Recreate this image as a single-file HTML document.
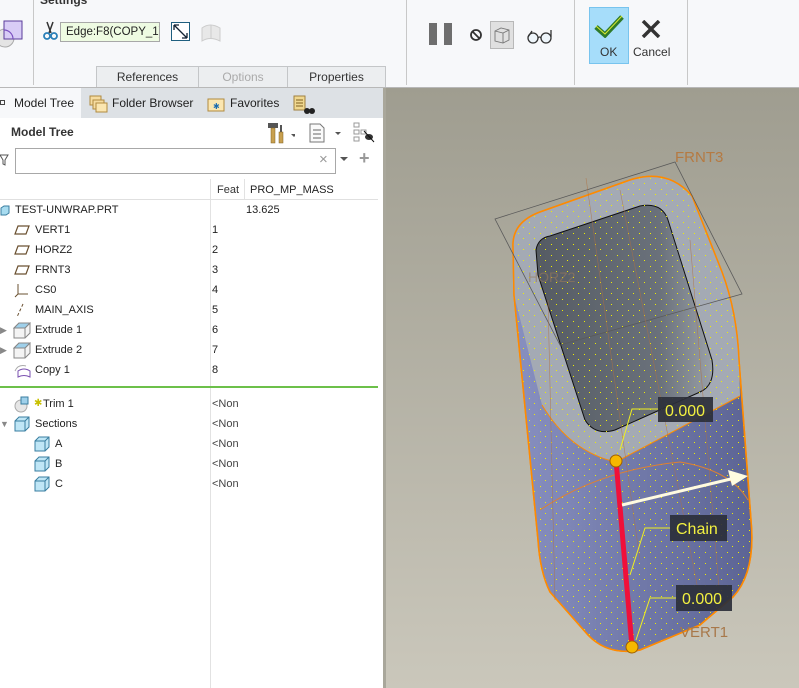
<!DOCTYPE html>
<html><head><meta charset="utf-8"><style>
*{margin:0;padding:0;box-sizing:border-box}
body{width:799px;height:688px;overflow:hidden;position:relative;font-family:"Liberation Sans",sans-serif;font-size:12px;color:#222;background:#f7f8fa}
.a{position:absolute}
.tab{position:absolute;top:66px;height:22px;background:#eceef0;border:1px solid #c4c6c8;border-bottom:none;text-align:center;line-height:21px;font-size:12px;color:#333}
.row{position:absolute;left:0;width:383px;height:20px;line-height:20px;font-size:11px;color:#222}
.row .n{position:absolute;left:212px}
.vs{position:absolute;width:1px;background:#c8c8c8}
</style></head><body>
<div class="a" style="left:40px;top:-7px;font-weight:bold;font-size:12px;color:#333">Settings</div>
<div class="vs" style="left:33px;top:0;height:85px"></div>
<div class="vs" style="left:406px;top:0;height:85px"></div>
<div class="vs" style="left:574px;top:0;height:85px"></div>
<div class="vs" style="left:687px;top:0;height:85px"></div>
<svg class="a" style="left:0;top:18px" width="30" height="34"><circle cx="5" cy="20" r="9" fill="#e4e4e4" stroke="#aaa"/><rect x="4" y="3" width="18" height="18" fill="#d8ccf6" stroke="#5a3d9a"/><path d="M4 12 A9 9 0 0 1 13 21" fill="none" stroke="#7a4fc0" stroke-width="1.2"/></svg>
<svg class="a" style="left:41px;top:21px" width="18" height="20"><path d="M6 1 L10 12 M12 1 L8 12" stroke="#333" stroke-width="1.5"/><circle cx="6" cy="15" r="3" fill="none" stroke="#2a7fb8" stroke-width="1.8"/><circle cx="13" cy="15" r="3" fill="none" stroke="#2a7fb8" stroke-width="1.8"/></svg>
<div class="a" style="left:60px;top:22px;width:100px;height:20px;background:#eefbe2;border:1px solid #a8a8a8;line-height:18px;padding-left:5px;font-size:11.5px;white-space:nowrap;overflow:hidden">Edge:F8(COPY_1)</div>
<svg class="a" style="left:171px;top:22px" width="19" height="19"><rect x="0.5" y="0.5" width="18" height="18" fill="#fff" stroke="#1f5f7f"/><path d="M3 3 L16 16 M3 3 h5 M3 3 v5 M16 16 h-5 M16 16 v-5" stroke="#123" stroke-width="1.3" fill="none"/></svg>
<svg class="a" style="left:200px;top:23px" width="22" height="20"><path d="M2 18 V5 Q10 -1 20 5 V18 Q10 13 2 18Z" fill="#e8e8e8" stroke="#ccc"/><path d="M11 2 V16" stroke="#ccc"/></svg>
<div class="tab" style="left:96px;width:103px">References</div>
<div class="tab" style="left:198px;width:90px;color:#aaa">Options</div>
<div class="tab" style="left:287px;width:99px">Properties</div>
<div class="a" style="left:429px;top:23px;width:8px;height:22px;background:#6e6e6e"></div>
<div class="a" style="left:444px;top:23px;width:8px;height:22px;background:#6e6e6e"></div>
<svg class="a" style="left:469px;top:28px" width="14" height="14"><circle cx="7" cy="7" r="5" fill="none" stroke="#333" stroke-width="1.8"/><path d="M3.5 3.5 L10.5 10.5" stroke="#333" stroke-width="1.8"/></svg>
<div class="a" style="left:490px;top:21px;width:24px;height:28px;background:#e0e0e0;border:1px solid #b8b8b8"></div>
<svg class="a" style="left:493px;top:26px" width="18" height="18"><path d="M2 5 L8 2 L16 4 L16 14 L10 17 L2 15 Z M2 5 L10 7 L16 4 M10 7 V17" fill="none" stroke="#777" stroke-width="0.9"/></svg>
<svg class="a" style="left:526px;top:28px" width="28" height="16"><circle cx="7" cy="10" r="5" fill="#eef5fa" stroke="#333" stroke-width="1.3"/><circle cx="20" cy="10" r="5" fill="#eef5fa" stroke="#333" stroke-width="1.3"/><path d="M12 10 Q13.5 8 15 10 M2 9 L6 3 M25 9 L25 2" fill="none" stroke="#333" stroke-width="1.3"/></svg>
<div class="a" style="left:589px;top:7px;width:40px;height:57px;background:#a6ddfa;border:1px solid #78c4ee"></div>
<svg class="a" style="left:594px;top:14px" width="30" height="24"><path d="M2 13 L11 21 L28 3" fill="none" stroke="#2f7a2a" stroke-width="5"/><path d="M2 12 L11 20 L28 2" fill="none" stroke="#d8e830" stroke-width="1"/></svg>
<div class="a" style="left:600px;top:45px;font-size:12px;color:#333">OK</div>
<svg class="a" style="left:641px;top:20px" width="20" height="18"><path d="M2 1 L18 17 M18 1 L2 17" stroke="#333" stroke-width="3.5"/></svg>
<div class="a" style="left:633px;top:45px;font-size:12px;color:#333">Cancel</div>
<div class="a" style="left:0;top:87px;width:799px;height:1px;background:#b8b8b8"></div>
<svg class="a" style="left:386px;top:88px" width="413" height="600" viewBox="386 88 413 600">
<defs>
<linearGradient id="bg" x1="0" y1="0" x2="0" y2="1"><stop offset="0" stop-color="#9f9d90"/><stop offset="1" stop-color="#cac7bb"/></linearGradient>
<linearGradient id="low" x1="0" y1="0" x2="1" y2="0"><stop offset="0" stop-color="#8890c0"/><stop offset="1" stop-color="#5c6494"/></linearGradient>
<linearGradient id="dk" x1="0" y1="0" x2="1" y2="0"><stop offset="0" stop-color="#555b63"/><stop offset="0.7" stop-color="#6a717b"/><stop offset="1" stop-color="#9aa0a8"/></linearGradient>
<pattern id="dots" width="11" height="11" patternUnits="userSpaceOnUse"><rect x="1" y="2" width="1" height="1" fill="#f0f000"/><rect x="6" y="7" width="1" height="1" fill="#f0f000"/></pattern>
</defs>
<rect x="386" y="88" width="413" height="600" fill="url(#bg)"/>
<path d="M513,245 Q513,222 540,212 L630,180 Q668,168 692,196 L722,272 Q737,312 739,360 L751,520 Q756,572 733,597 L700,625 L640,650 Q608,656 588,635 L550,592 Q540,572 538,540 L514,295 Z" fill="url(#low)" stroke="#ff8a00" stroke-width="1.5"/>
<path d="M513,245 Q513,222 540,212 L630,180 Q668,168 692,196 L722,272 Q737,312 739,360 L740,396 L616,462 Q570,452 542,405 L514,295 Z" fill="#a4aab4"/>
<path d="M536,250 Q538,238 550,236 L640,206 Q662,202 668,220 L712,360 Q716,385 700,392 L615,430 Q595,436 585,420 L538,275 Z" fill="url(#dk)" stroke="#111" stroke-width="1"/>
<path d="M513,245 Q513,222 540,212 L630,180 Q668,168 692,196 L722,272 Q737,312 739,360 L751,520 Q756,572 733,597 L700,625 L640,650 Q608,656 588,635 L550,592 Q540,572 538,540 L514,295 Z" fill="url(#dots)" stroke="#ff8a00" stroke-width="1.5"/>
<path d="M740,396 L616,462 Q570,452 542,405" fill="none" stroke="#ff8a00" stroke-width="1"/>
<path d="M540,510 Q600,470 680,462 Q730,470 748,500" fill="none" stroke="#e08030" stroke-width="1"/>
<path d="M495,219 L675,162 L742,294 L560,345 Z" fill="none" stroke="#5a5a5a" stroke-width="0.8"/>
<path d="M586,178 L640,560 M620,190 L700,600 M548,300 L555,600 M690,240 L720,600" stroke="#b07040" stroke-width="0.6" opacity="0.7"/>
<text x="675" y="162" font-family="Liberation Sans" font-size="15" fill="#b57a42">FRNT3</text>
<text x="528" y="282" font-family="Liberation Sans" font-size="14" fill="#9a7a5a" opacity="0.6">HORZ2</text>
<text x="680" y="637" font-family="Liberation Sans" font-size="15" fill="#a8784a">VERT1</text>
<path d="M616,460 L632,647" stroke="#f0103a" stroke-width="5"/>
<path d="M622,505 L735,478" stroke="#fffbe0" stroke-width="3"/><path d="M748,476 L728,470 L732,486 Z" fill="#fffbe0"/>
<path d="M658,409 L632,409 L620,450 M670,528 L645,528 L630,575 M676,598 L650,598 L636,640" fill="none" stroke="#f0f020" stroke-width="1"/>
<rect x="658" y="397" width="55" height="25" fill="#2b2f3a" opacity="0.92"/><text x="665" y="416" font-family="Liberation Sans" font-size="16" fill="#f2f040">0.000</text>
<rect x="670" y="515" width="57" height="26" fill="#2b2f3a" opacity="0.92"/><text x="676" y="534" font-family="Liberation Sans" font-size="16" fill="#f2f040">Chain</text>
<rect x="676" y="585" width="56" height="26" fill="#2b2f3a" opacity="0.92"/><text x="682" y="604" font-family="Liberation Sans" font-size="16" fill="#f2f040">0.000</text>
<circle cx="616" cy="461" r="6" fill="#f6b800" stroke="#a06000"/>
<circle cx="632" cy="647" r="6" fill="#f6b800" stroke="#a06000"/>
</svg>
<div class="a" style="left:0;top:88px;width:386px;height:600px;background:#a9a79b"></div>
<div class="a" style="left:0;top:88px;width:383px;height:30px;background:#dde1e5"></div>
<div class="a" style="left:0;top:88px;width:81px;height:30px;background:#f7f8fa"></div>
<div class="a" style="left:0;top:100px;width:5px;height:5px;border:1px solid #444"></div>
<div class="a" style="left:14px;top:96px;font-size:12px">Model Tree</div>
<svg class="a" style="left:89px;top:95px" width="20" height="18"><rect x="1" y="1" width="11" height="9" fill="#f6dca0" stroke="#b08a40"/><rect x="4" y="5" width="11" height="9" fill="#f6dca0" stroke="#b08a40"/><rect x="7" y="8" width="11" height="9" fill="#fbe6b0" stroke="#b08a40"/></svg>
<div class="a" style="left:112px;top:96px;font-size:12px">Folder Browser</div>
<svg class="a" style="left:207px;top:97px" width="18" height="15"><rect x="1" y="2" width="16" height="12" fill="#fbe6b0" stroke="#b08a40"/><text x="6" y="12" font-size="8" fill="#1a6bb0">✱</text></svg>
<div class="a" style="left:230px;top:96px;font-size:12px">Favorites</div>
<svg class="a" style="left:293px;top:95px" width="22" height="20"><rect x="1" y="1" width="11" height="14" fill="#f0d890" stroke="#a08040"/><path d="M3 5 h7 M3 8 h7 M3 11 h7" stroke="#806020"/><circle cx="14" cy="16" r="3" fill="#222"/><circle cx="19" cy="16" r="3" fill="#222"/></svg>
<div class="a" style="left:0;top:118px;width:383px;height:570px;background:#fff"></div>
<div class="a" style="left:11px;top:125px;font-weight:bold;font-size:12px;color:#333">Model Tree</div>
<svg class="a" style="left:265px;top:122px" width="30" height="22"><rect x="3" y="1" width="10" height="5" fill="#555"/><rect x="6" y="6" width="4" height="15" fill="#c8a050" stroke="#806020" stroke-width="0.5"/><rect x="15" y="3" width="2" height="8" fill="#555"/><rect x="14" y="10" width="4" height="11" fill="#c8a050" stroke="#806020" stroke-width="0.5"/><path d="M26 12 L32 12 L29 15Z" fill="#555"/></svg>
<svg class="a" style="left:309px;top:123px" width="34" height="20"><path d="M1 1 H11 L15 5 V19 H1Z" fill="#fafafa" stroke="#777"/><path d="M4 7 h8 M4 11 h8 M4 15 h8" stroke="#666"/><path d="M26 9 L32 9 L29 12Z" fill="#555"/></svg>
<svg class="a" style="left:353px;top:122px" width="22" height="22"><rect x="1" y="1" width="5" height="4" fill="none" stroke="#999"/><rect x="1" y="8" width="5" height="4" fill="none" stroke="#999"/><rect x="1" y="15" width="5" height="4" fill="none" stroke="#999"/><rect x="8" y="8" width="5" height="4" fill="none" stroke="#999"/><ellipse cx="16" cy="15" rx="4" ry="3" fill="#333"/><path d="M11 9 L21 20" stroke="#111"/></svg>
<svg class="a" style="left:0;top:154px" width="9" height="12"><path d="M0 1 H8 L5 6 V11 L3 10 V6Z" fill="none" stroke="#555"/></svg>
<div class="a" style="left:15px;top:148px;width:321px;height:26px;border:1px solid #a8a8a8;background:#fff"></div>
<div class="a" style="left:319px;top:151px;color:#999;font-size:15px">×</div>
<svg class="a" style="left:340px;top:157px" width="10" height="6"><path d="M0 0 L8 0 L4 4Z" fill="#555"/></svg>
<div class="a" style="left:359px;top:148px;color:#999;font-size:18px;font-weight:bold">+</div>
<div class="vs" style="left:210px;top:179px;height:509px;background:#e2e2e2"></div>
<div class="vs" style="left:244px;top:179px;height:20px;background:#e2e2e2"></div>
<div class="a" style="left:217px;top:184px;font-size:11px;color:#333">Feat</div>
<div class="a" style="left:250px;top:184px;font-size:11px;color:#222">PRO_MP_MASS</div>
<div class="a" style="left:0;top:199px;width:378px;height:1px;background:#e0e0e0"></div>
<div class="row" style="top:200px"><svg class="a" style="left:0;top:5px" width="10" height="11"><path d="M1 3 L4 1 H9 V8 L6 10 H1Z" fill="#a8dcf0" stroke="#3a7ea0"/></svg><span class="a" style="left:15px">TEST-UNWRAP.PRT</span><span class="a" style="left:246px">13.625</span></div>
<div class="row" style="top:220px"><svg class="a" style="left:14px;top:5px" width="16" height="10"><path d="M4 1 H15 L12 9 H1Z" fill="none" stroke="#6a5030" stroke-width="1.2"/></svg><span class="a" style="left:35px">VERT1</span><span class="n">1</span></div>
<div class="row" style="top:240px"><svg class="a" style="left:14px;top:5px" width="16" height="10"><path d="M4 1 H15 L12 9 H1Z" fill="none" stroke="#6a5030" stroke-width="1.2"/></svg><span class="a" style="left:35px">HORZ2</span><span class="n">2</span></div>
<div class="row" style="top:260px"><svg class="a" style="left:14px;top:5px" width="16" height="10"><path d="M4 1 H15 L12 9 H1Z" fill="none" stroke="#6a5030" stroke-width="1.2"/></svg><span class="a" style="left:35px">FRNT3</span><span class="n">3</span></div>
<div class="row" style="top:280px"><svg class="a" style="left:14px;top:3px" width="16" height="15"><path d="M4 1 V11 H14 M4 11 L1 14" fill="none" stroke="#6a5030"/></svg><span class="a" style="left:35px">CS0</span><span class="n">4</span></div>
<div class="row" style="top:300px"><svg class="a" style="left:14px;top:3px" width="12" height="15"><path d="M9 1 L3 14" stroke="#6a5030" stroke-dasharray="3 2"/></svg><span class="a" style="left:35px">MAIN_AXIS</span><span class="n">5</span></div>
<div class="row" style="top:320px"><span class="a" style="left:0;color:#888;font-size:9px">▶</span><svg class="a" style="left:13px;top:2px" width="18" height="17"><path d="M1 6 L6 1 H17 V11 L12 16 H1Z M1 6 H12 V16 M12 6 L17 1" fill="#f4f4f4" stroke="#888"/><path d="M1 6 L6 1 H17 L12 6Z" fill="#9fd0ea" stroke="#888"/></svg><span class="a" style="left:35px">Extrude 1</span><span class="n">6</span></div>
<div class="row" style="top:340px"><span class="a" style="left:0;color:#888;font-size:9px">▶</span><svg class="a" style="left:13px;top:2px" width="18" height="17"><path d="M1 6 L6 1 H17 V11 L12 16 H1Z M1 6 H12 V16 M12 6 L17 1" fill="#f4f4f4" stroke="#888"/><path d="M1 6 L6 1 H17 L12 6Z" fill="#9fd0ea" stroke="#888"/></svg><span class="a" style="left:35px">Extrude 2</span><span class="n">7</span></div>
<div class="row" style="top:360px"><svg class="a" style="left:14px;top:3px" width="18" height="15"><path d="M1 8 Q4 1 12 3" fill="none" stroke="#aaa"/><path d="M4 14 V8 Q10 4 16 8 V14 Q10 11 4 14Z" fill="#fff" stroke="#7a50b0"/></svg><span class="a" style="left:35px">Copy 1</span><span class="n">8</span></div>
<div class="a" style="left:0;top:386px;width:378px;height:2px;background:#6cc04a"></div>
<div class="row" style="top:394px"><svg class="a" style="left:13px;top:1px" width="22" height="18"><circle cx="8" cy="11" r="6" fill="#e6e6e6" stroke="#aaa"/><rect x="8" y="2" width="7" height="7" fill="#9fd0ea" stroke="#3a7ea0"/></svg><span class="a" style="left:34px;color:#c8c000;font-size:10px">✱</span><span class="a" style="left:43px">Trim 1</span><span class="n" style="color:#444">&lt;Non</span></div>
<div class="row" style="top:414px"><span class="a" style="left:0;color:#888;font-size:9px">▼</span><svg class="a" style="left:14px;top:2px" width="17" height="16"><path d="M1 5 L5 1 H15 V11 L11 15 H1Z" fill="#bfe6f6" stroke="#3a7ea0"/><path d="M1 5 H11 V15 M11 5 L15 1" fill="none" stroke="#3a7ea0"/></svg><span class="a" style="left:35px">Sections</span><span class="n" style="color:#444">&lt;Non</span></div>
<div class="row" style="top:434px"><svg class="a" style="left:34px;top:2px" width="17" height="16"><path d="M1 5 L5 1 H15 V11 L11 15 H1Z" fill="#bfe6f6" stroke="#3a7ea0"/><path d="M1 5 H11 V15 M11 5 L15 1" fill="none" stroke="#3a7ea0"/></svg><span class="a" style="left:55px">A</span><span class="n" style="color:#444">&lt;Non</span></div>
<div class="row" style="top:454px"><svg class="a" style="left:34px;top:2px" width="17" height="16"><path d="M1 5 L5 1 H15 V11 L11 15 H1Z" fill="#bfe6f6" stroke="#3a7ea0"/><path d="M1 5 H11 V15 M11 5 L15 1" fill="none" stroke="#3a7ea0"/></svg><span class="a" style="left:55px">B</span><span class="n" style="color:#444">&lt;Non</span></div>
<div class="row" style="top:474px"><svg class="a" style="left:34px;top:2px" width="17" height="16"><path d="M1 5 L5 1 H15 V11 L11 15 H1Z" fill="#bfe6f6" stroke="#3a7ea0"/><path d="M1 5 H11 V15 M11 5 L15 1" fill="none" stroke="#3a7ea0"/></svg><span class="a" style="left:55px">C</span><span class="n" style="color:#444">&lt;Non</span></div>
</body></html>
